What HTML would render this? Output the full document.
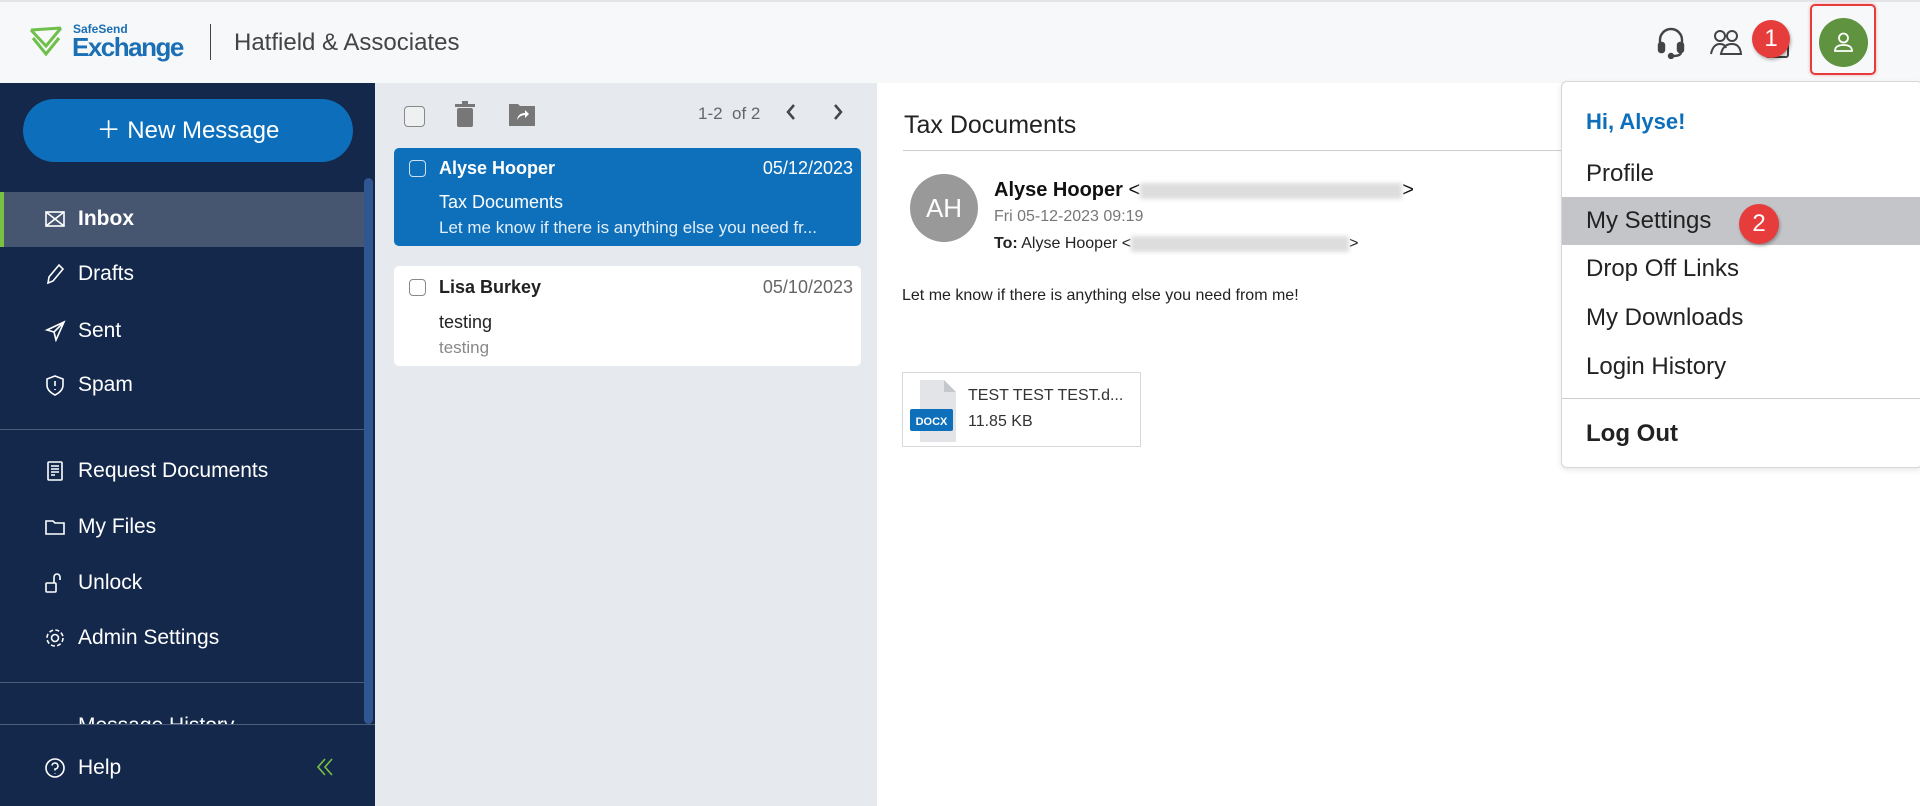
<!DOCTYPE html>
<html><head><meta charset="utf-8"><style>
*{margin:0;padding:0;box-sizing:border-box}
body{width:1920px;height:806px;overflow:hidden;font-family:"Liberation Sans",sans-serif;background:#fff;position:relative}
.a{position:absolute}
.hdr{left:0;top:0;width:1920px;height:83px;background:#f7f8fa;border-top:2px solid #e2e4e8}
.side{left:0;top:83px;width:375px;height:723px;background:#14284b}
.nav{position:absolute;left:44px;color:#fff;font-size:21px;display:flex;align-items:center}
.nav svg{width:22px;height:22px;margin-right:12px;fill:none;stroke:#fff;stroke-width:1.6}
.list{left:375px;top:83px;width:502px;height:723px;background:#e6eaee}
.card{position:absolute;left:19px;width:467px;border-radius:5px}
.cb{position:absolute;left:15px;width:17px;height:17px;border:1.5px solid #888;border-radius:4px;background:#fff}
.dd{left:1561px;top:81px;width:362px;height:387px;background:#fff;border:1px solid #d8d8d8;border-radius:6px;box-shadow:0 2px 6px rgba(0,0,0,.1)}
.di{position:absolute;left:24px;font-size:24px;color:#222}
.badge{width:34px;height:34px;border-radius:50%;background:#e63c3c;color:#fff;font-size:24px;text-align:center;line-height:34px;box-shadow:1px 2px 3px rgba(0,0,0,.3)}
</style></head><body>
<div class="a hdr"></div>
<svg class="a" style="left:29px;top:24px" width="34" height="34" viewBox="0 0 34 34"><path d="M2 6 L17 22 L32 4 M2 6 L32 4" fill="none" stroke="#6fc04a" stroke-width="3"/><path d="M4 14 L17 30 L30 14" fill="none" stroke="#6fc04a" stroke-width="3"/></svg>
<div class="a" style="left:73px;top:22px;font-size:12px;font-weight:bold;color:#1a6fb5">SafeSend</div>
<div class="a" style="left:72px;top:32px;font-size:26px;font-weight:bold;color:#1a6fb5;letter-spacing:-1.5px">Exchange</div>
<div class="a" style="left:210px;top:24px;width:1px;height:36px;background:#444"></div>
<div class="a" style="left:234px;top:29px;font-size:24px;color:#444">Hatfield &amp; Associates</div>
<svg class="a" style="left:1657px;top:27px" width="28" height="32" viewBox="0 0 28 32" fill="none" stroke="#444" stroke-width="2.4"><path d="M3 18 V13 A11 11 0 0 1 25 13 V18"/><rect x="2" y="16" width="5" height="9" rx="2" fill="#444"/><rect x="21" y="16" width="5" height="9" rx="2" fill="#444"/><path d="M24 25 Q24 29 16 29"/><circle cx="14" cy="29" r="2" fill="#444"/></svg>
<svg class="a" style="left:1709px;top:28px" width="34" height="28" viewBox="0 0 34 28" fill="none" stroke="#444" stroke-width="2"><circle cx="11" cy="8" r="5"/><circle cx="23" cy="8" r="5"/><path d="M2 26 Q4 16 11 16 Q16 16 17 20"/><path d="M12 26 Q14 16 23 16 Q31 16 32 26 Z"/></svg>
<div class="a" style="left:1765px;top:42px;width:24px;height:16px;border:2.5px solid #444;border-radius:3px"></div>
<div class="a badge" style="left:1752px;top:20px;width:38px;height:38px;line-height:38px">1</div>
<div class="a" style="left:1810px;top:4px;width:66px;height:71px;border:2px solid #e63c3c;border-radius:5px;box-shadow:0 0 3px rgba(230,60,60,.4)"></div>
<div class="a" style="left:1819px;top:18px;width:49px;height:49px;border-radius:50%;background:#5f933f"></div>
<svg class="a" style="left:1831px;top:30px" width="25" height="25" viewBox="0 0 25 25" fill="none" stroke="#fff" stroke-width="1.8"><circle cx="12.5" cy="8" r="4.5"/><path d="M4 21 Q4 15 12.5 15 Q21 15 21 21 Z"/></svg>
<div class="a side"></div>
<div class="a" style="left:23px;top:99px;width:330px;height:63px;border-radius:32px;background:#0d6fbb;color:#fff;font-size:24px;text-align:center;line-height:63px">＋ New Message</div>
<div class="a" style="left:0;top:192px;width:364px;height:55px;background:#475670;border-left:4px solid #7ac143"></div>
<div class="nav" style="top:207px;font-weight:bold"><svg viewBox="0 0 22 22"><rect x="2" y="4" width="18" height="14"/><path d="M2 4 L20 18 M20 4 L2 18"/></svg>Inbox</div>
<div class="nav" style="top:262px"><svg viewBox="0 0 22 22"><path d="M4 20 L5 14 L15 2 L19 6 L9 18 Z"/></svg>Drafts</div>
<div class="nav" style="top:319px"><svg viewBox="0 0 22 22"><path d="M20 2 L3 10 L10 12 L12 20 Z M10 12 L20 2"/></svg>Sent</div>
<div class="nav" style="top:373px"><svg viewBox="0 0 22 22"><path d="M11 2 L19 5 V11 Q19 17 11 21 Q3 17 3 11 V5 Z M11 7 V12 M11 15 V16"/></svg>Spam</div>
<div class="a" style="left:0;top:429px;width:364px;height:1px;background:#4c5d7a"></div>
<div class="nav" style="top:459px"><svg viewBox="0 0 22 22"><rect x="4" y="2" width="14" height="18" rx="1"/><path d="M7 6H15M7 9H15M7 12H15M7 15H11"/></svg>Request Documents</div>
<div class="nav" style="top:515px"><svg viewBox="0 0 22 22"><path d="M2 5 H9 L11 7 H20 V18 H2 Z"/></svg>My Files</div>
<div class="nav" style="top:571px"><svg viewBox="0 0 22 22"><rect x="2" y="11" width="10" height="9" rx="1"/><path d="M10 11 V5 A3 3 0 0 1 16 5 V8"/></svg>Unlock</div>
<div class="nav" style="top:626px"><svg viewBox="0 0 22 22"><circle cx="11" cy="11" r="3.5"/><circle cx="11" cy="11" r="8" stroke-dasharray="4 2.3"/></svg>Admin Settings</div>
<div class="a" style="left:0;top:682px;width:364px;height:1px;background:#4c5d7a"></div>
<div class="a" style="left:0;top:712px;width:364px;height:12px;overflow:hidden"><div style="color:#fff;font-size:21px;padding-left:78px;margin-top:2px">Message History</div></div>
<div class="a" style="left:0;top:724px;width:375px;height:1px;background:#4c5d7a"></div>
<div class="nav" style="top:756px"><svg viewBox="0 0 22 22"><circle cx="11" cy="11" r="9"/><path d="M8 8.5 A3 3 0 1 1 11 12 V13.5 M11 16 V16.5"/></svg>Help</div>
<svg class="a" style="left:316px;top:757px" width="18" height="20" viewBox="0 0 18 20" fill="none" stroke="#7ac143" stroke-width="1.6"><path d="M9 2 L2 10 L9 18 M16 2 L9 10 L16 18"/></svg>
<div class="a" style="left:364px;top:178px;width:9px;height:546px;border-radius:5px;background:#2f5690"></div>
<div class="a list"></div>
<div class="a cb" style="left:404px;top:106px;width:21px;height:21px;background:#eef0f2"></div>
<svg class="a" style="left:455px;top:101px" width="20" height="26" viewBox="0 0 20 26" fill="#777"><rect x="2" y="7" width="16" height="19" rx="2"/><rect x="0" y="3" width="20" height="3"/><rect x="7" y="0" width="6" height="3"/></svg>
<svg class="a" style="left:509px;top:102px" width="26" height="24" viewBox="0 0 26 24"><path d="M0 2 H9 L11 4 H26 V24 H0 Z" fill="#777"/><path d="M8 18 Q9 11 16 11 V8 L20 12 L16 16 V13 Q11 13 8 18Z" fill="#fff"/></svg>
<div class="a" style="left:698px;top:104px;font-size:17px;color:#666">1-2&nbsp; of 2</div>
<svg class="a" style="left:785px;top:103px" width="12" height="18" viewBox="0 0 12 18" fill="none" stroke="#444" stroke-width="2.5"><path d="M9 2 L3 9 L9 16"/></svg>
<svg class="a" style="left:832px;top:103px" width="12" height="18" viewBox="0 0 12 18" fill="none" stroke="#444" stroke-width="2.5"><path d="M3 2 L9 9 L3 16"/></svg>
<div class="a card" style="left:394px;top:148px;height:98px;background:#0e70bb;color:#fff">
<div class="cb" style="top:12px;background:transparent;border-color:#cfe0f0"></div>
<div class="a" style="left:45px;top:10px;font-size:18px;font-weight:bold">Alyse Hooper</div>
<div class="a" style="right:8px;top:10px;font-size:18px">05/12/2023</div>
<div class="a" style="left:45px;top:44px;font-size:18px">Tax Documents</div>
<div class="a" style="left:45px;top:70px;font-size:17px;color:#e3eef8">Let me know if there is anything else you need fr...</div>
</div>
<div class="a card" style="left:394px;top:266px;height:100px;background:#fff">
<div class="cb" style="top:13px"></div>
<div class="a" style="left:45px;top:11px;font-size:18px;font-weight:bold;color:#222">Lisa Burkey</div>
<div class="a" style="right:8px;top:11px;font-size:18px;color:#666">05/10/2023</div>
<div class="a" style="left:45px;top:46px;font-size:18px;color:#222">testing</div>
<div class="a" style="left:45px;top:72px;font-size:17px;color:#888">testing</div>
</div>
<div class="a" style="left:904px;top:111px;font-size:25px;color:#222">Tax Documents</div>
<div class="a" style="left:903px;top:150px;width:660px;height:1px;background:#ccc"></div>
<div class="a" style="left:910px;top:174px;width:68px;height:68px;border-radius:50%;background:#999;color:#fff;font-size:26px;text-align:center;line-height:68px">AH</div>
<div class="a" style="left:994px;top:179px;font-size:20px;color:#111"><b>Alyse Hooper</b> &lt;<span style="display:inline-block;width:262px;height:16px;background:#ddd;vertical-align:middle;filter:blur(2px)"></span>&gt;</div>
<div class="a" style="left:994px;top:208px;font-size:16px;color:#777">Fri 05-12-2023 09:19</div>
<div class="a" style="left:994px;top:235px;font-size:16px;color:#222"><b>To:</b> Alyse Hooper &lt;<span style="display:inline-block;width:218px;height:16px;background:#ddd;vertical-align:middle;filter:blur(2px)"></span>&gt;</div>
<div class="a" style="left:902px;top:287px;font-size:16px;color:#222">Let me know if there is anything else you need from me!</div>
<div class="a" style="left:902px;top:372px;width:239px;height:75px;border:1px solid #d8d8d8"></div>
<svg class="a" style="left:910px;top:380px" width="46" height="62" viewBox="0 0 46 62"><path d="M10 0 H34 L46 12 V62 H10 Z" fill="#e2e4e8"/><path d="M34 0 V12 H46Z" fill="#c4c7cc"/><rect x="0" y="29" width="43" height="22" rx="2" fill="#0e70bb"/><text x="21.5" y="45" font-size="11" font-weight="bold" fill="#fff" text-anchor="middle" font-family="Liberation Sans">DOCX</text></svg>
<div class="a" style="left:968px;top:387px;font-size:16px;color:#333">TEST TEST TEST.d...</div>
<div class="a" style="left:968px;top:413px;font-size:16px;color:#333">11.85 KB</div>
<div class="a dd">
<div class="di" style="top:27px;color:#0d6fbb;font-weight:bold;font-size:22px">Hi, Alyse!</div>
<div class="di" style="top:78px">Profile</div>
<div class="a" style="left:0;top:115px;width:362px;height:48px;background:#c3c5c8"></div>
<div class="di" style="top:125px">My Settings</div>
<div class="a badge" style="left:177px;top:122px;width:40px;height:40px;line-height:40px">2</div>
<div class="di" style="top:173px">Drop Off Links</div>
<div class="di" style="top:222px">My Downloads</div>
<div class="di" style="top:271px">Login History</div>
<div class="a" style="left:0;top:316px;width:362px;height:1px;background:#ccc"></div>
<div class="di" style="top:338px;font-weight:bold">Log Out</div>
</div>
</body></html>
